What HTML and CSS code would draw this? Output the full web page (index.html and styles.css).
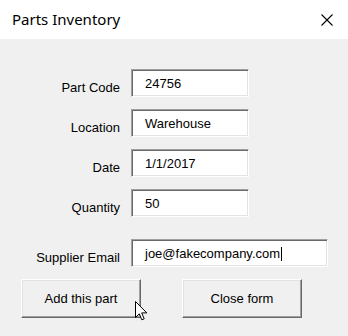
FILE: index.html
```html
<!DOCTYPE html>
<html>
<head>
<meta charset="utf-8">
<link rel="stylesheet" href="styles.css">
</head>
<body>
<div class="window">
  <div class="titlebar">
    <span class="title">Parts Inventory</span>
    <svg class="close" width="12" height="12" viewBox="0 0 12 12"><path d="M0.5 0.5 L11.5 11.5 M11.5 0.5 L0.5 11.5" stroke="#000" stroke-width="1.1" fill="none"/></svg>
  </div>
  <div class="content">
    <div class="form">
      <div class="label">Part Code</div>
      <div class="field">24756</div>
      <div class="label">Location</div>
      <div class="field">Warehouse</div>
      <div class="label">Date</div>
      <div class="field">1/1/2017</div>
      <div class="label">Quantity</div>
      <div class="field">50</div>
      <div class="label">Supplier Email</div>
      <div class="field wide">joe@fakecompany.com<span class="caret"></span></div>
    </div>
    <div class="buttons">
      <div class="button">Add this part</div>
      <div class="button">Close form</div>
    </div>
  </div>
  <svg class="pointer" width="13" height="21" viewBox="0 0 13 21"><path d="M0.5 0.5 L0.5 16.5 L4.3 12.8 L6.8 18.8 L9.2 17.8 L6.7 11.9 L11.8 11.9 Z" fill="#fff" stroke="#000" stroke-width="1" stroke-linejoin="miter"/></svg>
</div>
</body>
</html>
```

FILE: styles.css
```css
html, body {
  margin: 0;
  padding: 0;
}
body {
  width: 348px;
  height: 336px;
  overflow: hidden;
  font-family: "Liberation Sans", Arial, sans-serif;
  font-size: 13px;
  color: #000;
}
.window {
  position: relative;
  width: 348px;
  height: 336px;
  background: #f0f0f0;
}
.titlebar {
  height: 39px;
  background: #fff;
  display: flex;
  align-items: center;
  justify-content: space-between;
  padding: 0 15px 0 12px;
  box-sizing: border-box;
}
.title {
  font-family: "Noto Sans", "Open Sans", sans-serif;
  font-size: 15px;
  color: #000;
  margin-top: -1px;
}
.close {
  display: block;
}
.content {
  padding-top: 30px;
}
.form {
  display: grid;
  grid-template-columns: 120px auto;
  grid-template-rows: repeat(4, 28px) 38px;
  column-gap: 11px;
  row-gap: 12px;
  justify-items: start;
}
.label {
  justify-self: end;
  align-self: end;
  line-height: 15px;
  padding-bottom: 2px;
}
.field {
  align-self: end;
  box-sizing: border-box;
  width: 118px;
  height: 28px;
  background: #fff;
  border: 1px solid;
  border-color: #a0a0a0 #fff #fff #a0a0a0;
  box-shadow: inset 1px 1px 0 #696969, inset -1px -1px 0 #e3e3e3;
  padding: 6px 0 0 13px;
  line-height: 15px;
  white-space: nowrap;
}
.field.wide {
  width: 197px;
}
.caret {
  display: inline-block;
  width: 0;
  height: 14px;
  border-left: 1px solid #000;
  vertical-align: -3px;
  margin-left: 1px;
}
.buttons {
  display: flex;
  gap: 41px;
  padding-left: 21px;
  margin-top: 12px;
}
.button {
  box-sizing: border-box;
  width: 120px;
  height: 39px;
  background: #f0f0f0;
  border: 1px solid;
  border-color: #fff #696969 #696969 #fff;
  box-shadow: inset -1px -1px 0 #a0a0a0, inset 1px 1px 0 #e3e3e3;
  display: flex;
  align-items: center;
  justify-content: center;
  line-height: 15px;
  padding-bottom: 1px;
}
.pointer {
  position: absolute;
  left: 135px;
  top: 301px;
}
```
